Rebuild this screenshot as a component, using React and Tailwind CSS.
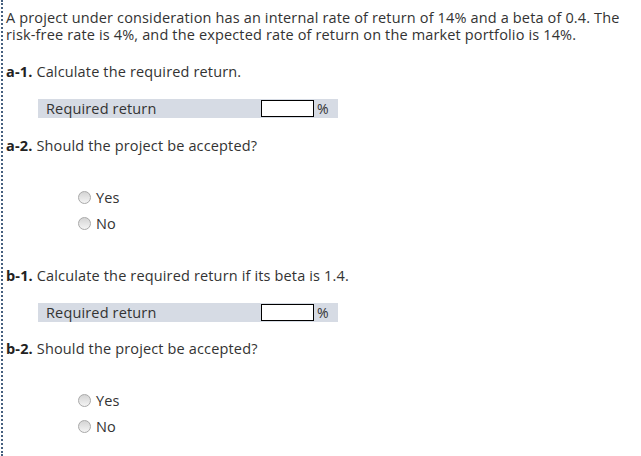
import React from "react";

const Radio = ({ label }) => (
    <label className="flex items-center h-[26px]">
        <span className="w-[13px] h-[13px] rounded-full border border-[#a9a9a9] bg-gradient-to-b from-[#d4d4d4] to-[#f4f4f4] mr-[5px]" />
        <span>{label}</span>
    </label>
);

const AnswerRow = () => (
    <div className="ml-[32px] w-[300px] h-[19px] bg-[#d6dbe4] flex items-center">
        <span className="pl-[8px] w-[223px]">Required return</span>
        <span className="w-[53px] h-[17px] bg-white border border-black" />
        <span className="ml-[3px] text-[14px]">%</span>
    </div>
);

const Question = ({ tag, text }) => (
    <p>
        <span className="font-bold text-[#222]">{tag}</span> {text}
    </p>
);

export default function App() {
    return (
        <div
            className="w-[641px] h-[456px] bg-white text-[#333] text-[14.5px] leading-[17px] tracking-[0.15px] overflow-hidden"
            style={{ fontFamily: "'Open Sans', sans-serif" }}
        >
            <div className="h-full ml-[1px] border-l-2 border-dotted border-[#46607f] pl-[3px] pt-[9px]">
                <p className="whitespace-nowrap">
                    A project under consideration has an internal rate of return of 14% and a beta of 0.4. The
                    <br />
                    risk-free rate is 4%, and the expected rate of return on the market portfolio is 14%.
                </p>

                <div className="mt-[20px]">
                    <Question tag="a-1." text="Calculate the required return." />
                </div>
                <div className="mt-[19px]">
                    <AnswerRow />
                </div>
                <div className="mt-[19px]">
                    <Question tag="a-2." text="Should the project be accepted?" />
                </div>
                <div className="mt-[30px] ml-[72px]">
                    <Radio label="Yes" />
                    <Radio label="No" />
                </div>

                <div className="mt-[31px]">
                    <Question tag="b-1." text="Calculate the required return if its beta is 1.4." />
                </div>
                <div className="mt-[19px]">
                    <AnswerRow />
                </div>
                <div className="mt-[18px]">
                    <Question tag="b-2." text="Should the project be accepted?" />
                </div>
                <div className="mt-[30px] ml-[72px]">
                    <Radio label="Yes" />
                    <Radio label="No" />
                </div>
            </div>
        </div>
    );
}
